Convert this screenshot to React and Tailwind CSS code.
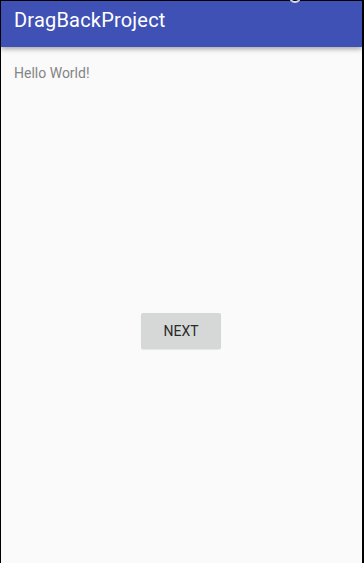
export default function App() {
  return (
    <div
      className="w-[364px] h-[563px] bg-black pt-px pl-px pr-[2px] flex flex-col overflow-hidden"
      style={{ fontFamily: "Roboto, 'Liberation Sans', sans-serif" }}
    >
      <div className="flex-1 bg-[#fafafa] flex flex-col">
        {/* Toolbar */}
        <div className="relative h-[46px] bg-[#3f51b5] flex items-start pl-[13px] pt-[6px] shadow-[0_2px_5px_rgba(0,0,0,0.35)] z-10">
          <span className="text-white text-[20px] leading-[26px] font-normal tracking-[0.2px]">
            DragBackProject
          </span>
          <div className="absolute top-[-10px] left-[288px] w-[12px] h-[12px] rounded-full border-2 border-white/80" />
        </div>
        {/* Content */}
        <div className="flex-1 flex flex-col pt-[17px] px-[13px]">
          <p className="text-[#858585] text-[14px] leading-[18px] font-normal">Hello World!</p>
          <div className="flex justify-center pt-[231px] pr-px">
            <button className="w-[80px] h-[36px] bg-[#d6d7d7] text-[#2a2a2a] text-[14px] rounded-[2px] shadow-[0_1px_1px_rgba(0,0,0,0.08)]">
              NEXT
            </button>
          </div>
        </div>
      </div>
    </div>
  );
}
